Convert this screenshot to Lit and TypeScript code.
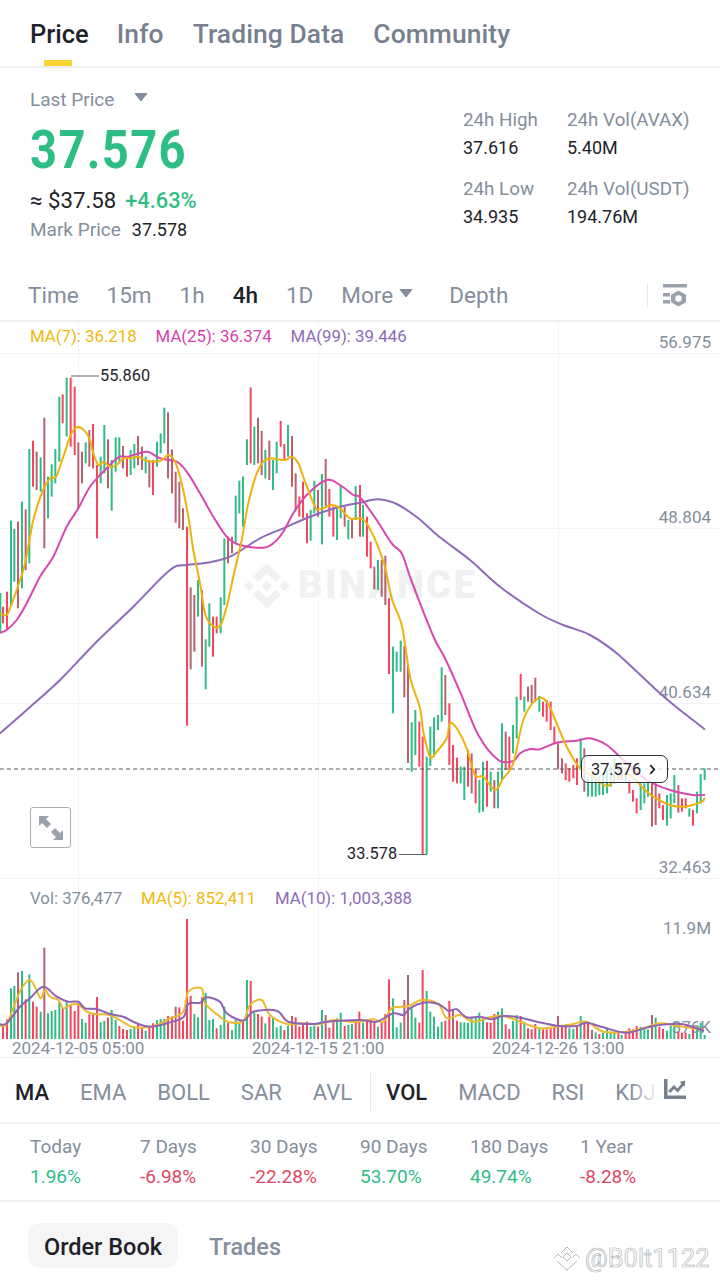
import { css, html, svg, LitElement } from "lit";
import { customElement } from "lit/decorators.js";

type Candle = [number, number, number, string];

const COLORS: Record<string, string> = { g: "#2ebd85", r: "#f6465d", d: "#b9626f" };

// candles are traced in groups: [x, top, bottom, kind], at 3x around an origin
const CANDLES_A: Candle[] = [
  [1,729,850,"g"],[9,770,820,"r"],[21,725,840,"r"],[33,512,770,"g"],[43,537,695,"g"],[54,515,775,"d"],[66,455,715,"g"],[77,478,660,"d"],
  [88,297,640,"g"],[99,272,410,"r"],[110,305,420,"d"],[122,322,425,"g"],[133,203,595,"d"],[144,380,505,"g"],[155,343,440,"g"],[166,297,400,"g"],
  [178,140,335,"g"],[188,133,220,"r"],[200,83,260,"g"],[212,83,290,"r"],[224,110,315,"r"],[235,277,475,"d"],[246,305,400,"d"],[257,277,340,"g"],
  [268,240,350,"d"],[279,222,355,"r"],[291,345,565,"r"],[302,320,400,"g"],[313,225,370,"g"],[324,268,415,"d"],[335,330,482,"g"],[347,262,365,"g"],
  [358,262,340,"g"],[369,288,355,"d"],[381,320,380,"r"],[392,300,375,"g"],[403,282,355,"g"],[414,258,345,"d"],[426,290,360,"d"],[437,320,370,"g"],
  [448,330,412,"d"],[459,330,435,"r"],[471,275,350,"g"],[482,250,310,"g"],[493,173,280,"g"],[504,187,385,"d"],[516,298,430,"d"],[527,365,518,"d"],
  [538,395,535,"d"],[549,475,540,"d"],[561,530,1127,"r"],[572,712,958,"d"],[583,735,905,"d"],[594,690,800,"g"],[606,720,950,"d"],[617,868,1018,"g"],
  [628,760,890,"g"],[639,800,920,"r"],[650,800,850,"r"],[662,742,850,"g"],[673,565,765,"g"],[684,560,640,"d"],[696,560,610,"d"],[707,437,580,"g"],
  [718,392,490,"g"],[729,380,530,"g"],[741,268,345,"g"],[752,112,340,"r"],[763,230,345,"g"],[774,203,340,"d"],[785,243,375,"d"],[796,300,385,"g"],
  [808,272,390,"d"],[819,330,420,"g"],[830,275,370,"g"],[842,213,290,"r"],[853,282,330,"r"],[864,225,320,"g"],[876,258,410,"d"],[887,370,480,"d"],
  [898,440,500,"r"],[909,395,505,"r"],[921,490,580,"r"],[932,480,572,"g"],[943,392,490,"g"],[954,420,500,"d"],[966,372,583,"g"],[977,327,470,"d"],
  [988,417,500,"r"],[1000,470,560,"r"],[1011,475,570,"g"],[1022,405,505,"g"],[1034,470,530,"d"],[1045,510,568,"g"],[1056,505,565,"d"],[1067,408,510,"g"],
];
const CANDLES_B: Candle[] = [
  [0,405,560,"r"],[9,465,560,"g"],[21,500,620,"r"],[32,575,655,"r"],[43,650,718,"d"],[54,630,720,"g"],[65,630,740,"d"],[76,617,765,"d"],
  [87,745,972,"r"],[99,890,1090,"g"],[110,905,965,"g"],[122,872,965,"g"],[133,888,1042,"d"],[144,945,1239,"d"],
];
const CANDLES_C: Candle[] = [
  [155,187,335,"g"],[166,150,285,"g"],[178,185,320,"r"],[188,230,583,"r"],[200,290,583,"g"],[211,200,318,"g"],[222,172,290,"g"],[234,165,210,"g"],
  [245,22,185,"g"],[256,45,165,"d"],[268,130,315,"r"],[279,255,365,"r"],[291,293,370,"r"],[302,320,370,"g"],[313,320,420,"g"],[324,270,380,"r"],
  [335,280,400,"d"],[347,325,430,"r"],[358,360,458,"g"],[369,305,455,"g"],[381,303,440,"r"],[392,335,395,"g"],[403,360,445,"d"],[414,335,445,"g"],
  [426,190,360,"g"],[437,215,330,"d"],[448,230,330,"r"],[459,195,280,"g"],[470,110,235,"g"],[482,42,120,"r"],[493,110,155,"g"],[504,80,125,"d"],
  [515,75,130,"d"],[526,53,125,"d"],[538,108,155,"g"],[549,125,170,"r"],[560,120,185,"r"],[572,125,210,"r"],[583,200,250,"r"],[594,250,328,"d"],
  [606,295,340,"d"],[617,310,360,"r"],[628,325,365,"r"],[640,315,355,"r"],[651,295,375,"r"],[662,235,330,"g"],[673,265,395,"d"],[684,350,410,"g"],
  [696,345,410,"g"],[707,350,410,"g"],[718,345,405,"g"],[729,340,405,"g"],[741,330,400,"g"],[752,320,380,"g"],[763,295,370,"g"],[775,310,360,"d"],
  [785,320,360,"d"],[797,335,365,"g"],[808,360,400,"r"],[819,390,425,"r"],[830,415,460,"r"],[842,370,450,"g"],[853,370,430,"g"],[864,360,410,"g"],
  [876,370,500,"d"],[887,370,495,"d"],[898,400,445,"r"],[909,435,480,"r"],[921,405,497,"g"],[932,400,475,"g"],[943,345,430,"g"],[955,375,458,"d"],
  [966,415,455,"r"],[977,415,445,"r"],[988,445,470,"g"],[999,450,497,"r"],[1011,395,460,"g"],[1022,342,430,"g"],[1034,325,360,"g"],
];

const VOL_A: [number, number, string][] = [
  [9,440,"r"],[21,418,"r"],[33,325,"g"],[43,318,"g"],[54,277,"d"],[66,273,"g"],[77,358,"r"],[88,283,"g"],[99,365,"r"],[110,380,"r"],[122,395,"g"],[133,203,"d"],
  [144,400,"g"],[155,393,"g"],[166,390,"g"],[178,365,"g"],[188,385,"r"],[200,365,"g"],[212,375,"r"],[224,393,"r"],[235,370,"r"],[246,417,"g"],[257,428,"g"],[268,403,"r"],
  [279,403,"r"],[291,351,"r"],[302,427,"g"],[313,423,"g"],[324,413,"r"],[335,390,"g"],[347,420,"g"],[358,438,"r"],[369,447,"r"],[381,450,"r"],[392,447,"g"],[403,443,"g"],
  [414,432,"r"],[426,445,"r"],[437,452,"g"],[448,440,"r"],[459,430,"r"],[471,420,"g"],[482,417,"g"],[493,417,"g"],[504,408,"r"],[516,410,"r"],[527,380,"d"],[538,382,"r"],
  [549,422,"r"],[561,117,"r"],[572,348,"r"],[583,402,"g"],[594,412,"g"],[606,352,"d"],[617,338,"g"],[628,420,"g"],[639,417,"g"],[650,445,"r"],[662,435,"g"],[673,380,"g"],
  [684,428,"r"],[696,450,"g"],[707,420,"g"],[718,428,"g"],[729,425,"r"],[741,300,"g"],[752,303,"r"],[763,398,"g"],[774,402,"r"],[785,410,"r"],[796,430,"g"],[808,410,"r"],
  [819,413,"g"],[830,442,"g"],[842,437,"g"],[853,450,"r"],[864,437,"g"],[876,408,"d"],[887,412,"r"],[898,440,"r"],[909,430,"r"],[921,425,"r"],[932,440,"g"],[943,437,"g"],
  [954,440,"r"],[966,390,"g"],[977,405,"d"],[988,443,"r"],[1000,425,"r"],[1011,415,"g"],[1022,398,"g"],[1034,438,"r"],[1045,435,"g"],[1056,432,"g"],[1067,428,"r"],
];
const VOL_B: [number, number, string][] = [
  [-2,395,"r"],[9,428,"g"],[21,418,"r"],[32,418,"r"],[43,422,"r"],[54,440,"g"],[65,428,"r"],[76,402,"r"],[87,298,"r"],[99,355,"g"],[110,442,"g"],[122,428,"g"],
  [133,360,"d"],[144,285,"d"],[155,385,"g"],[166,413,"g"],[178,428,"r"],[188,270,"r"],[200,333,"g"],[211,395,"g"],[222,410,"g"],[234,440,"g"],[245,425,"g"],[256,422,"r"],
  [268,363,"r"],[279,390,"d"],[291,422,"r"],[302,427,"g"],[313,427,"g"],[324,428,"g"],[335,415,"g"],[347,412,"g"],[358,398,"g"],[369,415,"g"],[381,427,"r"],[392,428,"r"],
  [403,402,"r"],[414,395,"g"],[426,385,"g"],[437,433,"r"],[448,447,"r"],[459,423,"g"],[470,405,"g"],[482,408,"r"],[493,425,"g"],[504,445,"r"],[515,448,"r"],[526,432,"r"],
  [538,442,"g"],[549,448,"r"],[560,448,"r"],[572,445,"r"],[583,440,"r"],[594,408,"d"],[606,435,"r"],[617,435,"r"],[628,445,"g"],[640,447,"g"],[651,440,"r"],[662,408,"g"],
  [673,423,"r"],[684,427,"r"],[696,450,"d"],[707,457,"g"],[718,462,"r"],[729,458,"g"],[741,445,"g"],[752,455,"g"],[763,455,"g"],[775,458,"r"],[785,465,"g"],[797,460,"r"],
  [808,445,"r"],[819,448,"r"],[830,438,"r"],[842,440,"g"],[853,448,"g"],[864,448,"g"],[876,405,"d"],[887,413,"g"],[898,440,"r"],[909,447,"r"],[921,452,"g"],[932,438,"g"],
  [943,425,"g"],[955,455,"r"],[966,458,"r"],[977,458,"r"],[988,462,"g"],[999,445,"r"],[1011,447,"g"],[1022,428,"g"],[1034,465,"g"],
];

// polylines: each part has an origin, points are traced at 3x
type Part = [number, number, number[]];

const MA7: Part[] = [
  [0, 350, [0,790,20,795,30,775,50,720,70,660,85,590,100,510,125,430,150,385,168,380,190,320,210,260,225,235,245,235,268,265,280,310,295,345,310,335,330,350,350,345,370,325,395,325,415,320,440,332,480,333,505,315,525,335,545,400,565,500,580,600,600,700,615,790,635,825,660,828,680,770,700,680,725,570,745,460,770,370,790,335,810,325,855,330,875,320,895,340,915,395,945,470,960,478,995,465,1020,475,1050,505,1080,505]],
  [360, 350, [20,520,50,580,75,650,95,745,125,825,145,950,155,1000,180,1075]],
  [360, 660, [190,215,210,290,230,275,260,235,270,190,290,205,320,265,345,345,370,350,405,390,430,355,460,310,490,180,530,118,560,125,590,190,620,260,660,325,700,350,740,378,770,355,810,345,850,385,880,410,930,435,975,440,1025,425,1033,415]],
];
const MA25: Part[] = [
  [0, 350, [0,848,20,840,50,810,80,760,120,680,160,620,200,530,235,475,270,410,310,365,355,322,385,320,440,305,480,325,530,335,560,365,600,430,640,500,680,560,720,585,790,593,820,580,850,545,880,490,920,435,980,390,1020,405,1060,435,1080,442]],
  [360, 350, [50,510,95,580,125,610,150,680,190,785,225,870,255,925]],
  [360, 660, [300,95,355,225,415,300,460,303,480,280,510,267,540,268,590,248,650,242,690,235,740,255,790,300,860,360,930,390,1000,405,1033,405]],
];
const MA99: Part[] = [
  [0, 680, [0,160,80,90,180,0]],
  [0, 350, [290,875,400,770,510,660,560,645,620,638,690,620,780,565,850,535,930,500,1010,473,1080,458]],
  [360, 350, [55,448,110,462,175,505,235,558,330,630,420,710,540,792,610,825,690,855,770,910,900,1030,960,1080]],
  [360, 660, [1033,207]],
];
const VOL_MA5: Part[] = [
  [0, 880, [0,437,20,432,45,370,65,325,88,300,105,320,122,355,135,330,150,350,175,360,190,385,210,375,235,373,260,395,290,403,320,403,350,415,395,440,430,443,470,435,510,415,550,395,565,335,605,325,615,370,660,410,690,427,730,423,750,375,785,360,810,405,860,432,900,430,960,432,1000,420,1050,425,1080,425]],
  [360, 880, [40,418,70,425,95,385,145,378,185,360,235,372,260,415,300,405,340,425,390,412,430,408,480,425,540,445,590,440,640,432,680,425,730,455,800,455,850,445,900,430,950,437,1030,450]],
];
const VOL_MA10: Part[] = [
  [0, 880, [0,433,20,430,60,380,90,355,130,320,170,350,205,365,235,365,255,385,290,387,330,402,370,410,410,430,450,440,500,430,550,412,565,372,600,368,620,352,660,365,680,400,730,422,760,395,830,392,865,425,940,432,980,425,1080,420]],
  [360, 880, [50,425,100,400,130,405,150,385,190,368,235,372,265,392,290,388,320,412,360,410,395,418,430,408,480,413,530,425,590,437,650,438,680,428,730,442,800,458,870,440,920,433,970,433,1030,452]],
];

// catmull-rom through the traced points, so the averages read as curves
const smoothPath = (parts: Part[]) => {
  const pts = parts.flatMap(([ox, oy, p]) => {
    const out: [number, number][] = [];
    for (let i = 0; i < p.length; i += 2) out.push([ox + p[i] / 3, oy + p[i + 1] / 3]);
    return out;
  });
  let d = `M${pts[0][0].toFixed(1)} ${pts[0][1].toFixed(1)}`;
  for (let i = 0; i < pts.length - 1; i++) {
    const a = pts[Math.max(i - 1, 0)];
    const b = pts[i];
    const c = pts[i + 1];
    const e = pts[Math.min(i + 2, pts.length - 1)];
    const c1x = b[0] + (c[0] - a[0]) / 6;
    const c1y = b[1] + (c[1] - a[1]) / 6;
    const c2x = c[0] - (e[0] - b[0]) / 6;
    const c2y = c[1] - (e[1] - b[1]) / 6;
    d += `C${c1x.toFixed(1)} ${c1y.toFixed(1)} ${c2x.toFixed(1)} ${c2y.toFixed(1)} ${c[0].toFixed(1)} ${c[1].toFixed(1)}`;
  }
  return d;
};

const candleRects = (list: Candle[], ox: number, oy: number) =>
  list.map(
    ([x, t, b, k]) => svg`<rect x=${ox + x / 3 - 1} y=${oy + t / 3} width="2" height=${(b - t) / 3} fill=${COLORS[k]}></rect>`
  );

const volRects = (list: [number, number, string][], ox: number) =>
  list.map(
    ([x, t, k]) => svg`<rect x=${ox + x / 3 - 1} y=${880 + t / 3} width="2" height=${1039 - (880 + t / 3)} fill=${COLORS[k]}></rect>`
  );

const bnbLogo = svg`
  <polygon points="38.73 53.2 63.31 28.62 87.9 53.21 102.2 38.91 63.31 0 24.43 38.88 38.73 53.2"></polygon>
  <polygon points="0 63.31 14.3 49.01 28.6 63.31 14.3 77.61"></polygon>
  <polygon points="38.73 73.41 63.31 97.99 87.9 73.4 102.2 87.7 63.31 126.61 24.43 87.73 38.73 73.41"></polygon>
  <polygon points="98.01 63.31 112.31 49.01 126.61 63.31 112.31 77.61"></polygon>
  <polygon points="77.81 63.3 63.31 48.8 48.82 63.29 63.31 77.79"></polygon>`;

const caret = html`<svg class="caret" viewBox="0 0 14 10" width="14" height="10"><path d="M1 1.5h12L7 9z" fill="#848e9c" stroke="#848e9c" stroke-linejoin="round"></path></svg>`;

const STATS = [
  ["Today", "1.96%", true],
  ["7 Days", "-6.98%", false],
  ["30 Days", "-22.28%", false],
  ["90 Days", "53.70%", true],
  ["180 Days", "49.74%", true],
  ["1 Year", "-8.28%", false],
] as const;

@customElement("app-root")
export class AppRoot extends LitElement {
  static styles = css`
    :host {
      display: block;
      width: 720px;
      height: 1280px;
      overflow: hidden;
      position: relative;
      background: #fff;
      font-family: Roboto, "Liberation Sans", sans-serif;
      color: #1e2329;
    }
    .tabs {
      height: 66px;
      border-bottom: 2px solid #eeeff1;
      display: flex;
      gap: 29px;
      padding-left: 30px;
      font-size: 26.4px;
      letter-spacing: 0.1px;
      font-weight: 500;
      color: #76808f;
      align-items: center;
    }
    .tabs span {
      padding-top: 2px;
    }
    .tabs .active {
      color: #1e2329;
      font-size: 25.5px;
      letter-spacing: 0;
      margin-right: -1px;
      position: relative;
      align-self: stretch;
      display: flex;
      align-items: center;
    }
    .tabs .active::after {
      content: "";
      position: absolute;
      left: 14px;
      width: 28px;
      bottom: 0;
      height: 6px;
      background: #fcd535;
    }
    .summary {
      height: 202px;
      padding: 20px 0 0 30px;
      box-sizing: border-box;
      display: flex;
      justify-content: space-between;
    }
    .last {
      display: flex;
      align-items: center;
      gap: 20px;
      height: 22px;
      font-size: 19px;
      color: #848e9c;
    }
    .last .caret {
      margin-top: -4px;
    }
    .big {
      font-size: 53px;
      line-height: 60px;
      font-weight: 700;
      color: #2ebd85;
      margin-top: 10px;
      letter-spacing: 1.5px;
      transform: scaleX(0.89);
      transform-origin: left center;
    }
    .fiat {
      display: flex;
      align-items: baseline;
      gap: 9px;
      margin-top: 8px;
      font-size: 22.2px;
      line-height: 24px;
    }
    .fiat b {
      font-weight: 500;
      font-size: 21.8px;
      color: #2ebd85;
    }
    .mark {
      display: flex;
      gap: 11px;
      margin-top: 5px;
      font-size: 19px;
      line-height: 24px;
      color: #848e9c;
    }
    .mark span {
      color: #1e2329;
      font-size: 18px;
    }
    .highs {
      display: grid;
      grid-template-columns: 104px 153px;
      grid-auto-rows: 69px;
      padding-top: 21px;
      font-size: 18.8px;
      color: #848e9c;
    }
    .highs div {
      display: flex;
      flex-direction: column;
      gap: 4px;
      line-height: 23px;
      white-space: nowrap;
    }
    .highs span {
      color: #1e2329;
      font-size: 18px;
    }
    .times {
      height: 50px;
      border-bottom: 2px solid #eeeff1;
      display: flex;
      align-items: center;
      padding: 0 33px 0 28px;
      font-size: 22.5px;
      color: #848e9c;
    }
    .times span {
      margin-right: 28px;
    }
    .times .on {
      color: #1e2329;
      font-weight: 500;
    }
    .times .more {
      display: flex;
      align-items: center;
      gap: 6px;
      margin-right: 36px;
    }
    .times .more svg {
      margin-top: -5px;
    }
    .times .tools {
      margin-left: auto;
      display: flex;
      align-items: center;
      gap: 15px;
    }
    .times .tools i {
      width: 1px;
      height: 24px;
      background: #e6e8ea;
    }
    .chart {
      height: 736px;
      position: relative;
      box-sizing: border-box;
      border-bottom: 1px solid #eeeff1;
    }
    .chart svg.plot {
      position: absolute;
      left: 0;
      top: -322px;
      width: 720px;
      height: 1280px;
      pointer-events: none;
    }
    .legend {
      position: absolute;
      left: 30px;
      display: flex;
      gap: 19px;
      font-size: 16.8px;
      line-height: 20px;
      white-space: nowrap;
    }
    .legend.main {
      top: 4px;
    }
    .legend.vol {
      top: 566px;
    }
    .yellow {
      color: #f0b90b;
    }
    .pink {
      color: #d63fb0;
    }
    .purple {
      color: #8e6bb8;
    }
    .gray {
      color: #848e9c;
    }
    .axis {
      position: absolute;
      right: 9px;
      font-size: 17px;
      line-height: 20px;
      color: #848e9c;
    }
    .date {
      position: absolute;
      top: 716px;
      font-size: 17px;
      line-height: 20px;
      color: #848e9c;
    }
    .note {
      position: absolute;
      font-size: 16.3px;
      line-height: 20px;
      color: #1e2329;
    }
    .brand {
      position: absolute;
      left: 298px;
      top: 240px;
      font-size: 38px;
      line-height: 46px;
      font-weight: 900;
      letter-spacing: 2.5px;
      color: #eff1f2;
    }
    .price-tag {
      position: absolute;
      left: 581px;
      top: 433px;
      width: 87px;
      height: 28px;
      box-sizing: border-box;
      border: 1px solid #2b3139;
      border-radius: 7px;
      background: rgba(255, 255, 255, 0.78);
      display: flex;
      align-items: center;
      gap: 8px;
      padding-left: 9px;
      font-size: 16.3px;
      color: #1e2329;
    }
    .expand {
      position: absolute;
      left: 30px;
      top: 485px;
      width: 41px;
      height: 41px;
      box-sizing: border-box;
      border: 1.5px solid #a9afb9;
      border-radius: 3px;
      display: flex;
      align-items: center;
      justify-content: center;
      background: #fff;
    }
    .indicators {
      height: 60px;
      border-bottom: 2px solid #eeeff1;
      display: flex;
      align-items: center;
      padding: 4px 0 0 15px;
      font-size: 22px;
      color: #848e9c;
      position: relative;
      overflow: hidden;
    }
    .indicators span {
      margin-right: 31px;
      white-space: nowrap;
    }
    .indicators .on {
      color: #1e2329;
      font-weight: 500;
    }
    .indicators i {
      width: 1px;
      height: 38px;
      background: #e6e8ea;
      margin: 0 15px 0 -13px;
    }
    .indicators .fade {
      position: absolute;
      left: 630px;
      top: 0;
      width: 34px;
      height: 60px;
      background: linear-gradient(90deg, rgba(255, 255, 255, 0), #fff 85%);
    }
    .indicators svg {
      position: absolute;
      left: 664px;
      top: 21px;
    }
    .stats {
      border-bottom: 2px solid #eeeff1;
      display: grid;
      grid-template-columns: repeat(6, 110px);
      padding: 11px 0 0 30px;
      box-sizing: border-box;
      height: 78px;
      font-size: 19px;
      color: #848e9c;
    }
    .stats div {
      display: flex;
      flex-direction: column;
      gap: 6px;
      line-height: 24px;
    }
    .stats .up {
      color: #2ebd85;
    }
    .stats .down {
      color: #e0475f;
    }
    .book {
      display: flex;
      align-items: center;
      gap: 31px;
      padding: 21px 0 0 28px;
      font-size: 23.5px;
      font-weight: 500;
      color: #848e9c;
    }
    .book span {
      padding-top: 3px;
    }
    .book .on {
      background: #f5f5f5;
      color: #1e2329;
      border-radius: 12px;
      height: 42px;
      width: 150px;
      display: flex;
      align-items: center;
      justify-content: center;
    }
    .stamp {
      position: absolute;
      left: 553px;
      top: 1244px;
      display: flex;
      align-items: center;
      gap: 4px;
      font-size: 25.4px;
      line-height: 28px;
      color: #fff;
      -webkit-text-stroke: 0.7px #b4b7bb;
    }
  `;

  render() {
    return html`
      <nav class="tabs">
        <span class="active">Price</span><span>Info</span><span>Trading Data</span><span>Community</span>
      </nav>
      <section class="summary">
        <div>
          <div class="last">Last Price ${caret}</div>
          <div class="big">37.576</div>
          <div class="fiat">≈ $37.58 <b>+4.63%</b></div>
          <div class="mark">Mark Price <span>37.578</span></div>
        </div>
        <div class="highs">
          <div>24h High<span>37.616</span></div>
          <div>24h Vol(AVAX)<span>5.40M</span></div>
          <div>24h Low<span>34.935</span></div>
          <div>24h Vol(USDT)<span>194.76M</span></div>
        </div>
      </section>
      <nav class="times">
        <span>Time</span><span>15m</span><span>1h</span><span class="on">4h</span><span>1D</span>
        <span class="more">More ${caret}</span><span>Depth</span>
        <div class="tools">
          <i></i>
          <svg viewBox="0 0 24 22" width="24" height="22" fill="#99a1ad">
            <rect x="0" y="0" width="24" height="3.5"></rect>
            <rect x="0" y="9" width="7" height="3.5"></rect>
            <rect x="0" y="16" width="7" height="3.5"></rect>
            <path fill-rule="evenodd" d="M15.5 6.5l7.5 4.2v7.6l-7.5 4.2-7.5-4.2v-7.6zM15.5 11.3a3.2 3.2 0 1 0 0 6.4 3.2 3.2 0 0 0 0-6.4z"></path>
          </svg>
        </div>
      </nav>
      <section class="chart">
        <div class="brand">BINANCE</div>
        <span class="axis" style="top:10px">56.975</span>
        <span class="axis" style="top:185px">48.804</span>
        <span class="axis" style="top:360px">40.634</span>
        <span class="axis" style="top:535px">32.463</span>
        <span class="axis" style="top:596px">11.9M</span>
        <span class="axis" style="top:695px">376K</span>
        <svg class="plot" viewBox="0 0 720 1280">
          <g stroke="#f2f3f5" stroke-width="1">
            <path d="M0 353.5H720M0 528.5H720M0 703.5H720M0 878.5H720"></path>
            <path d="M78.5 322V1058M318.5 322V1058M558.5 322V1058"></path>
          </g>
          <g transform="translate(244 563) scale(0.36)" fill="#eff1f2">${bnbLogo}</g>
          ${candleRects(CANDLES_A, 0, 350)} ${candleRects(CANDLES_B, 360, 350)} ${candleRects(CANDLES_C, 360, 660)}
          <path d="M0 769H720" stroke="#55595f" stroke-width="1" stroke-dasharray="4 3"></path>
          <path d="M71 376H99M399 854.5H427" stroke="#5b6068" stroke-width="1"></path>
          <g fill="none" stroke-width="2" stroke-linejoin="round" stroke-linecap="round">
            <path d=${smoothPath(MA99)} stroke="#8e6bb8"></path>
            <path d=${smoothPath(MA25)} stroke="#d848ae"></path>
            <path d=${smoothPath(MA7)} stroke="#eeb20f"></path>
          </g>
          ${volRects(VOL_A, 0)} ${volRects(VOL_B, 360)}
          <g fill="none" stroke-width="2" stroke-linejoin="round" stroke-linecap="round">
            <path d=${smoothPath(VOL_MA5)} stroke="#eeb92a"></path>
            <path d=${smoothPath(VOL_MA10)} stroke="#8e63b4"></path>
          </g>
        </svg>
        <div class="legend main">
          <span class="yellow">MA(7): 36.218</span><span class="pink">MA(25): 36.374</span><span class="purple">MA(99): 39.446</span>
        </div>
        <span class="note" style="left:100px;top:44px">55.860</span>
        <span class="note" style="left:347px;top:522px">33.578</span>
        <div class="price-tag">
          37.576
          <svg viewBox="0 0 8 12" width="7" height="11" fill="none" stroke="#1e2329" stroke-width="2"><path d="M1.5 1l4.5 5-4.5 5"></path></svg>
        </div>
        <div class="expand">
          <svg viewBox="0 0 26 26" width="26" height="26" fill="#9aa1ac">
            <path d="M1 1h10L8 4l5 5-4 4-5-5-3 3z"></path>
            <path d="M25 25H15l3-3-5-5 4-4 5 5 3-3z"></path>
          </svg>
        </div>
        <div class="legend vol">
          <span class="gray">Vol: 376,477</span><span class="yellow">MA(5): 852,411</span><span class="purple">MA(10): 1,003,388</span>
        </div>
        <span class="date" style="left:12px">2024-12-05 05:00</span>
        <span class="date" style="left:252px">2024-12-15 21:00</span>
        <span class="date" style="left:492px">2024-12-26 13:00</span>
      </section>
      <nav class="indicators">
        <span class="on">MA</span><span>EMA</span><span>BOLL</span><span>SAR</span><span>AVL</span><i></i>
        <span class="on">VOL</span><span>MACD</span><span>RSI</span><span>KDJ</span>
        <div class="fade"></div>
        <svg viewBox="0 0 22 20" width="22" height="20" fill="#76808f">
          <path d="M0 0h3.5v16.5H22V20H0z"></path>
          <path d="M4 12l6-6 3.5 3.5 4-5-1.8-1.5L21 1.5V8l-1.3-1.8-6 7.3L10 10l-3.5 4z"></path>
        </svg>
      </nav>
      <section class="stats">
        ${STATS.map(
          ([label, value, up]) => html`<div>${label}<span class=${up ? "up" : "down"}>${value}</span></div>`
        )}
      </section>
      <div class="book"><span class="on">Order Book</span><span>Trades</span></div>
      <div class="stamp">
        <svg viewBox="0 0 28 26" width="28" height="26" fill="none" stroke="#b4b7bb" stroke-width="1">
          <path d="M8 8l6-6 6 6M1 13l4-4 4 4M19 13l4-4 4 4M10 12l4-4 4 4-4 4zM4 16l10 9 10-9"></path>
        </svg>
        @B0lt1122
      </div>
    `;
  }
}
